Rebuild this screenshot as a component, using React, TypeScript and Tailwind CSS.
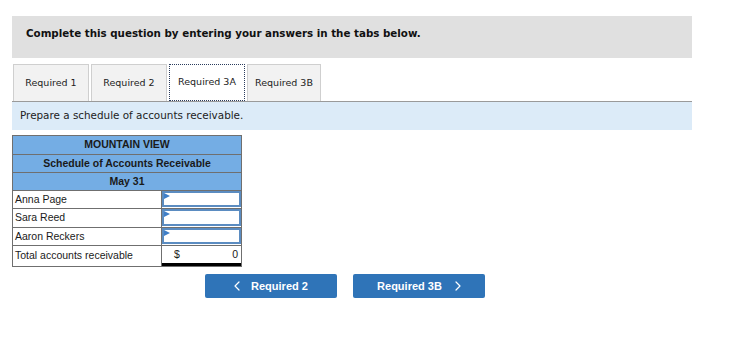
import React from "react";

const verdana = { fontFamily: '"DejaVu Sans", Verdana, sans-serif' };
const arial = { fontFamily: '"Liberation Sans", Arial, sans-serif' };

function Tab({ label, active, w }: { label: string; active?: boolean; w: string }) {
  return (
    <div
      className={
        active
          ? `h-[37px] ${w} flex items-center justify-center bg-white border border-dotted border-[#2a3b5c] text-[9.5px] text-[#222]`
          : `h-[37px] ${w} flex items-center justify-center bg-[#f2f2f2] border border-[#cfcfcf] border-b-0 text-[9.5px] text-[#222]`
      }
      style={verdana}
    >
      {label}
    </div>
  );
}

function InputCell() {
  return (
    <div className="relative h-full w-full border-2 border-[#5b8cc1] bg-white">
      <div className="absolute left-0 top-0 w-0 h-0 border-y-[3px] border-y-transparent border-l-[6px] border-l-[#3f7fc8]" />
    </div>
  );
}

function Chevron({ dir }: { dir: "left" | "right" }) {
  return (
    <svg width="6" height="10" viewBox="0 0 6 10" fill="none">
      <polyline
        points={dir === "left" ? "5,1 1,5 5,9" : "1,1 5,5 1,9"}
        stroke="white"
        strokeWidth="1.2"
        strokeLinecap="round"
        strokeLinejoin="round"
      />
    </svg>
  );
}

export default function App() {
  const rows: [string, string][] = [
    ["Anna Page", "h-[18px]"],
    ["Sara Reed", "h-[19px]"],
    ["Aaron Reckers", "h-[18px]"],
  ];
  return (
    <div className="w-[746px] h-[346px] bg-white pl-[12px] pt-[16px]">
      <div className="w-[680px]">
        <div
          className="h-[42px] bg-[#e0e0e0] pt-[11px] pl-[14px] text-[10.3px] leading-[12px] font-bold text-[#111]"
          style={verdana}
        >
          Complete this question by entering your answers in the tabs below.
        </div>
        <div className="mt-[6px] flex gap-[2px] pl-[1px]">
          <Tab label="Required 1" w="w-[76px]" />
          <Tab label="Required 2" w="w-[76px]" />
          <Tab label="Required 3A" w="w-[76px]" active />
          <Tab label="Required 3B" w="w-[74px]" />
        </div>
        <div
          className="h-[29px] bg-[#dcebf8] border-t border-[#9a9a9a] flex items-center pl-[8px] text-[10.4px] text-[#222]"
          style={verdana}
        >
          Prepare a schedule of accounts receivable.
        </div>
        <div className="mt-[5px] w-[230px] border border-[#6f6f6f] text-[10.5px] text-[#1a1a1a]" style={arial}>
          <div className="h-[19px] bg-[#74ade4] border-b border-[#6f6f6f] flex items-center justify-center font-bold">
            MOUNTAIN VIEW
          </div>
          <div className="h-[18px] bg-[#74ade4] border-b border-[#6f6f6f] flex items-center justify-center font-bold">
            Schedule of Accounts Receivable
          </div>
          <div className="h-[18px] bg-[#74ade4] border-b border-[#6f6f6f] flex items-center justify-center font-bold">
            May 31
          </div>
          {rows.map(([n, h]) => (
            <div key={n} className={`${h} flex border-b border-[#6f6f6f]`}>
              <div className="w-[149px] border-r border-[#6f6f6f] flex items-center pl-[2px]">{n}</div>
              <div className="flex-1 pb-[1px]">
                <InputCell />
              </div>
            </div>
          ))}
          <div className="h-[20px] flex">
            <div className="w-[149px] border-r border-[#6f6f6f] flex items-center pl-[2px]">Total accounts receivable</div>
            <div className="flex-1 flex items-center justify-between pr-[3px] pl-[12px] border-b-[3px] border-black">
              <span>$</span>
              <span>0</span>
            </div>
          </div>
        </div>
        <div className="mt-[7px] flex gap-[16px] pl-[193px]">
          <button
            className="h-[24px] w-[132px] rounded-[2px] bg-[#2f74b8] text-white text-[11px] font-bold flex items-center justify-center gap-[11px]"
            style={arial}
          >
            <Chevron dir="left" />
            <span>Required 2</span>
          </button>
          <button
            className="h-[24px] w-[132px] rounded-[2px] bg-[#2f74b8] text-white text-[11px] font-bold flex items-center justify-center gap-[13px]"
            style={arial}
          >
            <span>Required 3B</span>
            <Chevron dir="right" />
          </button>
        </div>
      </div>
    </div>
  );
}
